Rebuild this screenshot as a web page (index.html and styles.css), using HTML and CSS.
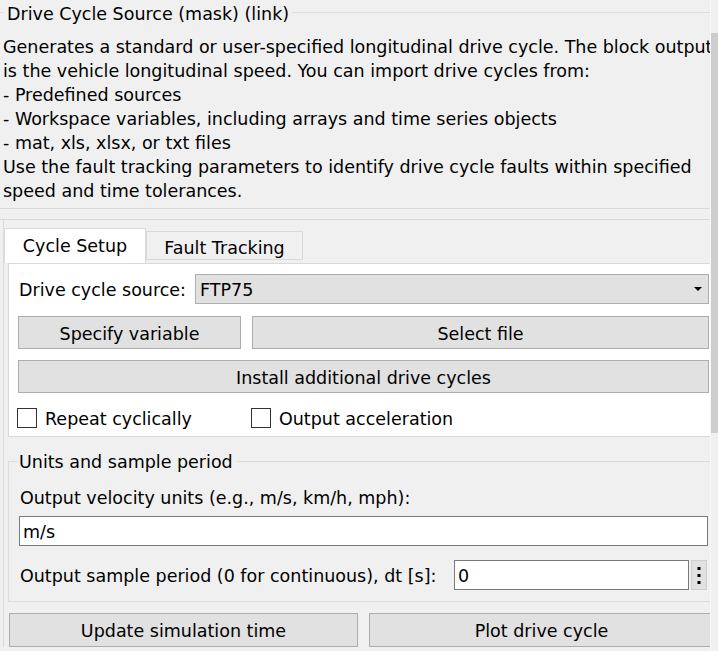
FILE: index.html
```html
<!DOCTYPE html>
<html lang="en">
<head>
    <meta charset="UTF-8">
    <title>Block Parameters: Drive Cycle Source</title>
    <link rel="stylesheet" href="styles.css">
</head>
<body>
    <div class="window">
        <div class="content">
            <div class="mask-head">
                <span class="mask-title">Drive Cycle Source (mask) (link)</span>
            </div>
            <div class="description">
                <div>Generates a standard or user-specified longitudinal drive cycle. The block output</div>
                <div>is the vehicle longitudinal speed. You can import drive cycles from:</div>
                <div>- Predefined sources</div>
                <div>- Workspace variables, including arrays and time series objects</div>
                <div>- mat, xls, xlsx, or txt files</div>
                <div>Use the fault tracking parameters to identify drive cycle faults within specified</div>
                <div>speed and time tolerances.</div>
            </div>

            <div class="params">
                <div class="params-inner">
                    <div class="tabs">
                        <div class="tab active">Cycle Setup</div>
                        <div class="tab">Fault Tracking</div>
                    </div>
                    <div class="tab-pane">
                        <div class="source-row">
                            <label class="source-label">Drive cycle source:</label>
                            <div class="dropdown">
                                <span class="dropdown-value">FTP75</span>
                                <span class="dropdown-arrow"></span>
                            </div>
                        </div>
                        <div class="button-row">
                            <button>Specify variable</button>
                            <button>Select file</button>
                        </div>
                        <button class="wide">Install additional drive cycles</button>
                        <div class="check-row">
                            <label class="check"><span class="box"></span><span class="check-text">Repeat cyclically</span></label>
                            <label class="check"><span class="box"></span><span class="check-text">Output acceleration</span></label>
                        </div>
                    </div>

                    <div class="group">
                        <div class="group-head">
                            <span class="group-title">Units and sample period</span>
                        </div>
                        <div class="group-body">
                            <div class="field-label">Output velocity units (e.g., m/s, km/h, mph):</div>
                            <input type="text" class="field-wide" value="m/s">
                            <div class="period-row">
                                <span class="period-label">Output sample period (0 for continuous), dt [s]:</span>
                                <input type="text" class="field-period" value="0">
                                <span class="more">
                                    <svg width="4" height="18" viewBox="0 0 4 18">
                                        <rect x="0.5" y="1" width="3" height="3" fill="#000"/>
                                        <rect x="0.5" y="8" width="3" height="3" fill="#000"/>
                                        <rect x="0.5" y="15" width="3" height="3" fill="#000"/>
                                    </svg>
                                </span>
                            </div>
                        </div>
                    </div>

                    <div class="actions">
                        <button>Update simulation time</button>
                        <button>Plot drive cycle</button>
                    </div>
                </div>
            </div>
        </div>
        <div class="scrollbar"><div class="thumb"></div></div>
    </div>
</body>
</html>
```

FILE: styles.css
```css
body {
    margin: 0;
    background-color: #f0f0f0;
    font-family: "DejaVu Sans", Verdana, sans-serif;
    font-size: 17.5px;
    color: #000;
}
.window {
    display: flex;
    width: 718px;
    height: 651px;
    overflow: hidden;
}
.content {
    width: 710px;
    flex: none;
    overflow: hidden;
}
.scrollbar {
    width: 8px;
    flex: none;
    background-color: #f0f0f0;
    border-left: 1px solid #f8f8f8;
    box-sizing: border-box;
}
.thumb {
    margin-top: 33px;
    height: 400px;
    background-color: #cdcdcd;
}

/* mask header */
.mask-head {
    display: flex;
    padding-top: 2px;
    height: 24px;
    line-height: 24px;
}
.mask-head::before,
.mask-head::after {
    content: "";
    margin-top: 10px;
    height: 0;
    border-top: 1px solid #dcdcdc;
}
.mask-head::before {
    width: 4px;
}
.mask-head::after {
    flex: 1;
}
.mask-title {
    padding: 0 3px;
    white-space: nowrap;
}
.description {
    margin-top: 9px;
    padding: 0 0 5px 3px;
    line-height: 24px;
    white-space: nowrap;
    border-bottom: 1px solid #d9d9d9;
    margin-bottom: 10px;
}

/* parameters */
.params {
    border-top: 1px solid #d9d9d9;
}
.params-inner {
    margin-left: 3px;
    border-left: 1px solid #dcdcdc;
    padding-top: 8px;
}
.tabs {
    display: flex;
    align-items: flex-end;
    height: 35px;
}
.tab {
    box-sizing: border-box;
    border: 1px solid #d9d9d9;
    text-align: center;
    white-space: nowrap;
}
.tab.active {
    width: 142px;
    height: 35px;
    line-height: 33px;
    padding-top: 1px;
    background-color: #fff;
    border-bottom: none;
}
.tab:not(.active) {
    width: 157px;
    height: 29px;
    line-height: 28px;
    margin-bottom: 3px;
    padding-top: 2px;
}
.tab-pane {
    margin-left: 4px;
    background-color: #fff;
    border: 1px solid #d9d9d9;
    border-right: none;
    padding: 10px 1px 9px 9px;
}
.source-row {
    display: flex;
    height: 30px;
    align-items: center;
}
.source-label {
    width: 177px;
    flex: none;
    padding: 2px 0 0 1px;
    box-sizing: border-box;
}
.dropdown {
    flex: 1;
    height: 30px;
    box-sizing: border-box;
    display: flex;
    align-items: center;
    background-color: #e1e1e1;
    border: 1px solid #adadad;
}
.dropdown-value {
    flex: 1;
    padding: 2px 0 0 4px;
}
.dropdown-arrow {
    width: 0;
    height: 0;
    margin-right: 6px;
    border-left: 4px solid transparent;
    border-right: 4px solid transparent;
    border-top: 4px solid #000;
}
button {
    font-family: inherit;
    font-size: inherit;
    color: #000;
    background-color: #e1e1e1;
    border: 1px solid #adadad;
    border-radius: 0;
    padding: 2px 0 0 0;
    height: 33px;
    box-sizing: border-box;
}
.button-row {
    display: grid;
    grid-template-columns: 223px 1fr;
    gap: 11px;
    margin-top: 12px;
}
.wide {
    display: block;
    width: 100%;
    margin-top: 11px;
}
.check-row {
    display: grid;
    grid-template-columns: 223px 1fr;
    gap: 11px;
    margin-top: 14px;
    height: 20px;
}
.check {
    display: flex;
    align-items: center;
    margin-left: -1px;
    white-space: nowrap;
}
.check-text {
    padding-top: 2px;
}
.box {
    width: 20px;
    height: 20px;
    box-sizing: border-box;
    border: 1px solid #333;
    background-color: #fff;
    margin-right: 8px;
    flex: none;
}

/* units group */
.group {
    margin: 12px 0 0 4px;
}
.group-head {
    display: flex;
    height: 24px;
    line-height: 24px;
}
.group-head::before {
    content: "";
    width: 9px;
    margin-top: 12px;
    border-top: 1px solid #dcdcdc;
    border-left: 1px solid #dcdcdc;
    box-sizing: border-box;
}
.group-head::after {
    content: "";
    flex: 1;
    margin-top: 12px;
    height: 0;
    border-top: 1px solid #dcdcdc;
}
.group-title {
    padding: 1px 4px 0 2px;
    white-space: nowrap;
}
.group-body {
    border-left: 1px solid #dcdcdc;
    border-bottom: 1px solid #dcdcdc;
    padding: 13px 2px 11px 10px;
}
.field-label {
    line-height: 24px;
    padding-left: 1px;
}
input[type="text"] {
    font-family: inherit;
    font-size: inherit;
    color: #000;
    height: 30px;
    box-sizing: border-box;
    border: 1px solid #7a7a7a;
    border-radius: 0;
    background-color: #fff;
    padding: 2px 3px 0 3px;
    outline: none;
}
.field-wide {
    display: block;
    width: 100%;
    margin-top: 6px;
}
.period-row {
    display: flex;
    align-items: center;
    margin-top: 14px;
    height: 30px;
}
.period-label {
    width: 435px;
    flex: none;
    padding: 2px 0 0 1px;
    box-sizing: border-box;
    white-space: nowrap;
}
.field-period {
    width: 235px;
    flex: none;
}
.more {
    width: 16px;
    height: 30px;
    margin-left: 2px;
    box-sizing: border-box;
    background-color: #e1e1e1;
    border: 1px solid #cfcfcf;
    display: flex;
    align-items: center;
    justify-content: center;
}

/* bottom buttons */
.actions {
    display: grid;
    grid-template-columns: 349px 1fr;
    gap: 11px;
    margin: 11px -4px 0 5px;
}
.actions button {
    height: 34px;
}
```
